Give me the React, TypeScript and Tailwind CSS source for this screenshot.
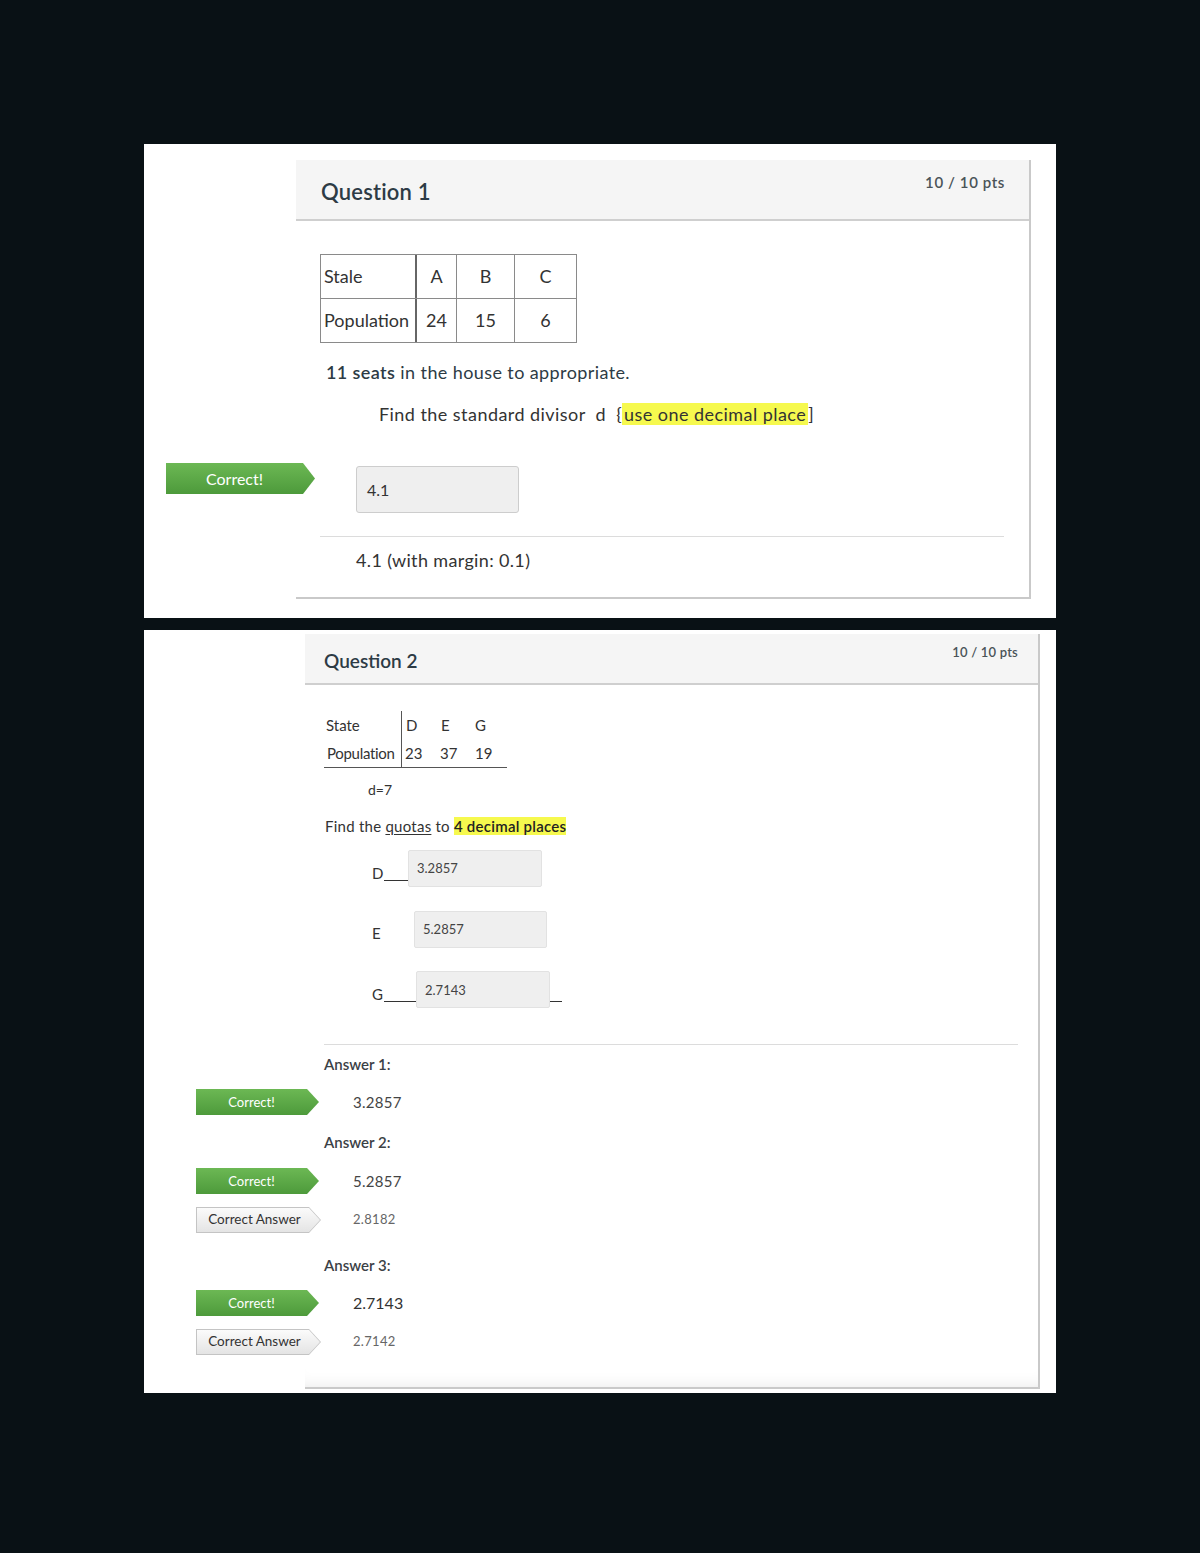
import React from "react";

function GreenBadge({ w, h, tip, size }: { w: number; h: number; tip: number; size: number }) {
  return (
    <div
      className="flex shrink-0 items-center bg-gradient-to-b from-[#6cb854] to-[#4d9a3b] text-white [clip-path:polygon(0_0,calc(100%-12px)_0,100%_50%,calc(100%-12px)_100%,0_100%)]"
      style={{ width: w, height: h, fontSize: size }}
    >
      <span className="block text-center leading-none" style={{ width: w - tip }}>
        Correct!
      </span>
    </div>
  );
}

function GrayBadge() {
  return (
    <div className="flex h-[26px] w-[125px] shrink-0 bg-[#c4c4c4] p-px [clip-path:polygon(0_0,calc(100%-12px)_0,100%_50%,calc(100%-12px)_100%,0_100%)]">
      <div className="flex h-full w-full items-center bg-gradient-to-b from-[#fbfbfb] to-[#e4e4e4] text-[13.5px] text-[#333] [clip-path:polygon(0_0,calc(100%-11px)_0,100%_50%,calc(100%-11px)_100%,0_100%)]">
        <span className="block w-[115px] text-center leading-none">Correct Answer</span>
      </div>
    </div>
  );
}

export default function App() {
  return (
    <div className="min-h-[1553px] w-[1200px] bg-[#091115] pt-[144px] pl-[144px] font-['Lato','Noto_Sans',sans-serif] text-[#2d3b45]">
      {/* Panel 1 */}
      <div className="h-[474px] w-[912px] bg-white pt-[16px] pl-[152px]">
        <div className="w-[735px] border-r-2 border-b-2 border-[#c9c9c9]">
          <div className="flex h-[61px] items-start justify-between border-b-2 border-[#cfcfcf] bg-[#f5f5f5] pl-[25px] pr-[24px]">
            <div className="mt-[18px] text-[22px] leading-[28px] font-semibold tracking-[0.2px] text-[#2d3b45]">Question 1</div>
            <div className="mt-[12px] text-[15px] leading-[20px] font-semibold tracking-[0.6px] text-[#4a5358]">10 / 10 pts</div>
          </div>
          <div className="pl-[24px] pb-[25px]">
            <div className="mt-[33px] flex w-[257px] flex-col border border-[#8a8a8a] text-[18px] text-[#333]">
              <div className="flex h-[44px] border-b border-[#8a8a8a]">
                <div className="flex w-[96px] items-center border-r-2 border-[#666] pl-[3px]">Stale</div>
                <div className="flex w-[40px] items-center justify-center border-r border-[#8a8a8a]">A</div>
                <div className="flex w-[58px] items-center justify-center border-r border-[#8a8a8a]">B</div>
                <div className="flex flex-1 items-center justify-center">C</div>
              </div>
              <div className="flex h-[43px]">
                <div className="flex w-[96px] items-center border-r-2 border-[#666] pl-[3px]">Population</div>
                <div className="flex w-[40px] items-center justify-center border-r border-[#8a8a8a]">24</div>
                <div className="flex w-[58px] items-center justify-center border-r border-[#8a8a8a]">15</div>
                <div className="flex flex-1 items-center justify-center">6</div>
              </div>
            </div>
            <div className="mt-[17px] ml-[6px] text-[18px] leading-[24px] tracking-[0.4px] text-[#2d3b45]">
              <span className="font-semibold">11 seats</span> in the house to appropriate.
            </div>
            <div className="mt-[18px] ml-[59px] text-[18px] leading-[24px] tracking-[0.45px] text-[#333]">
              Find the standard divisor&nbsp; d&nbsp; {"{"}
              <span className="bg-[#f6f94e] px-[2px]">use one decimal place</span>]
            </div>
            <div className="mt-[37px] -ml-[154px] flex items-start">
              <GreenBadge w={149} h={31} tip={12} size={16} />
              <div className="mt-[3px] ml-[41px] flex h-[47px] w-[163px] items-center rounded-[3px] border border-[#cdcdcd] bg-[#efefef] pl-[10px] text-[16px] text-[#333]">
                4.1
              </div>
            </div>
            <div className="mt-[23px] mr-[25px] h-0 border-t border-[#dcdcdc]"></div>
            <div className="mt-[11px] ml-[36px] text-[18px] leading-[24px] tracking-[0.35px] text-[#333]">4.1 (with margin: 0.1)</div>
          </div>
        </div>
      </div>

      {/* Panel 2 */}
      <div className="mt-[12px] h-[763px] w-[912px] bg-white pt-[4px] pl-[161px]">
        <div className="w-[735px] border-r-2 border-b-2 border-[#c9c9c9] shadow-[0_-14px_18px_-16px_rgba(0,0,0,0.12)_inset]">
          <div className="flex h-[51px] items-start justify-between border-b-2 border-[#cfcfcf] bg-[#f5f5f5] pl-[19px] pr-[20px]">
            <div className="mt-[15px] text-[19px] leading-[24px] font-semibold text-[#2d3b45]">Question 2</div>
            <div className="mt-[9px] text-[13px] leading-[18px] font-semibold tracking-[0.2px] text-[#4a5358]">10 / 10 pts</div>
          </div>
          <div className="pl-[19px] pb-[32px]">
            <div className="mt-[26px] w-[183px] border-b border-[#555] text-[15px] text-[#333]">
              <div className="flex h-[28px]">
                <div className="flex w-[78px] items-end border-r border-[#555] pl-[2px] pb-[3px]">State</div>
                <div className="flex w-[34px] items-end pl-[4px] pb-[3px]">D</div>
                <div className="flex w-[34px] items-end pl-[5px] pb-[3px]">E</div>
                <div className="flex items-end pl-[5px] pb-[3px]">G</div>
              </div>
              <div className="flex h-[28px]">
                <div className="flex w-[78px] items-center border-r border-[#555] pl-[3px] tracking-[-0.3px]">Population</div>
                <div className="flex w-[34px] items-center pl-[3px]">23</div>
                <div className="flex w-[34px] items-center pl-[4px]">37</div>
                <div className="flex items-center pl-[5px]">19</div>
              </div>
            </div>
            <div className="mt-[13px] ml-[44px] text-[14px] leading-[18px] text-[#333]">d=7</div>
            <div className="mt-[17px] ml-[1px] text-[15px] leading-[20px] tracking-[0.25px] text-[#333]">
              Find the <span className="underline underline-offset-2">quotas</span> to{" "}
              <span className="bg-[#f6f94e] font-semibold text-[#222]">4 decimal places</span>
            </div>

            <div className="mt-[14px] ml-[48px] flex items-start text-[15px] text-[#333]">
              <div className="mt-[13px] w-[12px] leading-[20px]">D</div>
              <div className="mt-[30px] w-[24px] border-b border-[#333]"></div>
              <div className="flex h-[37px] w-[134px] items-start rounded-[2px] border border-[#e2e2e2] bg-[#efefef] pt-[9px] pl-[8px] text-[13px] leading-[16px] text-[#444]">
                3.2857
              </div>
            </div>
            <div className="mt-[24px] ml-[48px] flex items-start text-[15px] text-[#333]">
              <div className="mt-[12px] w-[42px] leading-[20px]">E</div>
              <div className="flex h-[37px] w-[133px] items-start rounded-[2px] border border-[#e2e2e2] bg-[#efefef] pt-[9px] pl-[8px] text-[13px] leading-[16px] text-[#444]">
                5.2857
              </div>
            </div>
            <div className="mt-[23px] ml-[48px] flex items-start text-[15px] text-[#333]">
              <div className="mt-[13px] w-[12px] leading-[20px]">G</div>
              <div className="mt-[30px] w-[32px] border-b border-[#333]"></div>
              <div className="flex h-[37px] w-[134px] items-start rounded-[2px] border border-[#e2e2e2] bg-[#efefef] pt-[10px] pl-[8px] text-[13px] leading-[16px] text-[#444]">
                2.7143
              </div>
              <div className="mt-[30px] w-[12px] border-b border-[#333]"></div>
            </div>

            <div className="mt-[36px] mr-[20px] h-0 border-t border-[#dcdcdc]"></div>

            <div className="mt-[9px] text-[15px] leading-[20px] font-semibold text-[#3b4146]">Answer 1:</div>
            <div className="mt-[15px] -ml-[128px] flex items-center">
              <GreenBadge w={123} h={26} tip={12} size={13} />
              <div className="ml-[34px] text-[15px] tracking-[0.3px] text-[#444]">3.2857</div>
            </div>

            <div className="mt-[17px] text-[15px] leading-[20px] font-semibold text-[#3b4146]">Answer 2:</div>
            <div className="mt-[16px] -ml-[128px] flex items-center">
              <GreenBadge w={123} h={26} tip={12} size={13} />
              <div className="ml-[34px] text-[15px] tracking-[0.3px] text-[#444]">5.2857</div>
            </div>
            <div className="mt-[13px] -ml-[128px] flex items-center">
              <GrayBadge />
              <div className="ml-[32px] text-[13px] tracking-[0.3px] text-[#666]">2.8182</div>
            </div>

            <div className="mt-[22px] text-[15px] leading-[20px] font-semibold text-[#3b4146]">Answer 3:</div>
            <div className="mt-[15px] -ml-[128px] flex items-center">
              <GreenBadge w={123} h={26} tip={12} size={13} />
              <div className="ml-[34px] text-[16px] text-[#333]">2.7143</div>
            </div>
            <div className="mt-[13px] -ml-[128px] flex items-center">
              <GrayBadge />
              <div className="ml-[32px] text-[13px] tracking-[0.3px] text-[#666]">2.7142</div>
            </div>
          </div>
        </div>
      </div>
    </div>
  );
}
